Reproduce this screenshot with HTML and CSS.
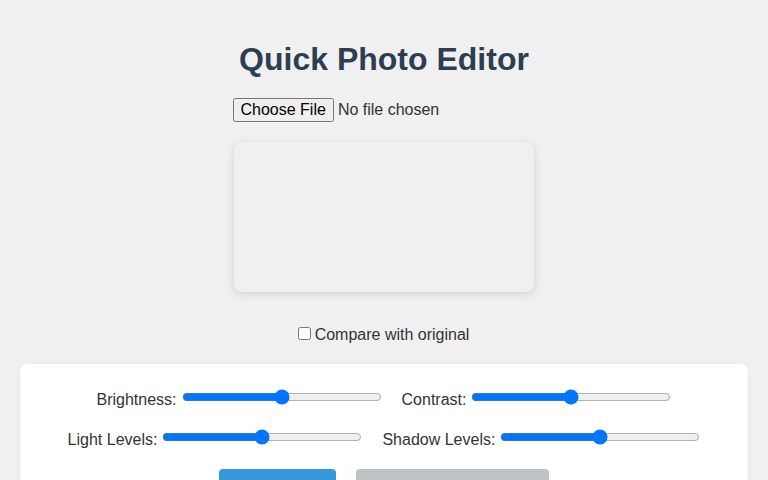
FILE: index.html
```html
<!DOCTYPE html>
<html lang="en">
<head>
<meta charset="utf-8">
<title>Quick Photo Editor</title>
<link rel="stylesheet" href="styles.css">
</head>
<body>
  <main class="editor">
    <h1 class="title">Quick Photo Editor</h1>
    <div class="upload">
      <input type="file" id="fileInput" accept="image/*">
    </div>
    <div class="preview-wrap">
      <canvas class="preview" width="300" height="150"></canvas>
    </div>
    <div class="compare">
      <label class="compare-label"><input type="checkbox" id="compare">Compare with original</label>
    </div>
    <section class="controls">
      <div class="sliders">
        <div class="control-group">
          <label for="brightness">Brightness:</label><input type="range" id="brightness" min="0" max="200" value="100" class="slider">
        </div>
        <div class="control-group">
          <label for="contrast">Contrast:</label><input type="range" id="contrast" min="0" max="200" value="100" class="slider">
        </div>
        <div class="control-group">
          <label for="light">Light Levels:</label><input type="range" id="light" min="0" max="200" value="100" class="slider">
        </div>
        <div class="control-group">
          <label for="shadow">Shadow Levels:</label><input type="range" id="shadow" min="0" max="200" value="100" class="slider">
        </div>
      </div>
      <div class="actions">
        <button class="btn btn-primary">Download</button>
        <button class="btn btn-secondary">Reset All Adjustments</button>
      </div>
    </section>
  </main>
</body>
</html>
```
FILE: styles.css
```css
html, body {
  margin: 0;
  padding: 0;
}

body {
  background: #f0f0f0;
  font-family: "Liberation Sans", Arial, sans-serif;
  font-size: 16px;
  color: #333;
}

.editor {
  padding: 0 20px 20px;
}

.title {
  margin: 41px 0 0;
  font-size: 32px;
  font-weight: bold;
  color: #2c3e50;
  text-align: center;
}

.upload {
  margin-top: 20px;
  text-align: center;
}

.upload input[type="file"] {
  font-family: inherit;
  font-size: 16px;
  color: #333;
}

.preview-wrap {
  margin-top: 20px;
  display: flex;
  justify-content: center;
}

.preview {
  display: block;
  width: 300px;
  height: 150px;
  border-radius: 8px;
  box-shadow: 0 2px 8px rgba(0, 0, 0, 0.12);
}

.compare {
  margin-top: 32px;
  text-align: center;
}

.compare-label {
  margin-right: 5px;
}

.compare input {
  margin: 3px 4px 3px 4px;
}

.controls {
  margin-top: 20px;
  background: #fff;
  border-radius: 8px;
  padding: 23px 20px 20px;
  box-shadow: 0 2px 10px rgba(0, 0, 0, 0.04);
}

.sliders {
  display: flex;
  flex-wrap: wrap;
  justify-content: center;
  gap: 18px 18px;
  padding-left: 2px;
}

.control-group {
  white-space: nowrap;
}

.control-group label {
  margin-right: 3px;
}

.slider {
  width: 200px;
  margin: 2px;
}

.actions {
  margin-top: 20px;
  display: flex;
  justify-content: center;
  gap: 20px;
}

.btn {
  border: none;
  border-radius: 4px;
  padding: 10px 23px;
  font-family: inherit;
  font-size: 16px;
  color: #fff;
}

.btn-primary {
  background: #3498db;
}

.btn-secondary {
  padding-left: 19px;
  padding-right: 19px;
  background: #bdc3c7;
}
```
